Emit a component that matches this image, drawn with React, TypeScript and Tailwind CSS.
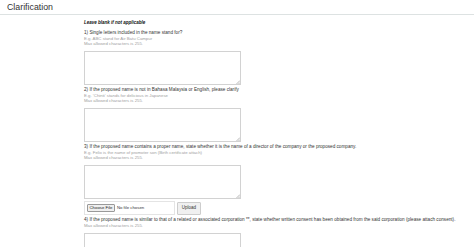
const sections = [
  {
    label: '1) Single letters included in the name stand for?',
    hints: ['E.g. ABC stand for Air Batu Campur', 'Max allowed characters is 255.'],
  },
  {
    label: '2) If the proposed name is not in Bahasa Malaysia or English, please clarify',
    hints: ['E.g. \u2018Chinti\u2019 stands for delicious in Japanese', 'Max allowed characters is 255.'],
  },
  {
    label:
      '3) If the proposed name contains a proper name, state whether it is the name of a director of the company or the proposed company.',
    hints: ['E.g. Felix is the name of promoter son (Birth certificate attach)', 'Max allowed characters is 255.'],
    upload: true,
  },
  {
    label:
      '4) If the proposed name is similar to that of a related or associated corporation **, state whether written consent has been obtained from the said corporation (please attach consent).',
    hints: ['Max allowed characters is 255.'],
  },
]

function Box() {
  return (
    <div className="relative mt-[5px] w-[157px] h-[34px]">
      <textarea className="block w-full h-full resize-none border border-[#d2d2d2] bg-white" />
      <svg className="absolute right-[1.5px] bottom-[1.5px] pointer-events-none" width="4" height="4" viewBox="0 0 4 4">
        <path d="M4 0.5L0.5 4M4 2.5L2.5 4" stroke="#8a8a8a" strokeWidth="0.6" />
      </svg>
    </div>
  )
}

export default function App() {
  return (
    <div className="w-[474px] h-[247px] overflow-hidden bg-white font-['Liberation_Sans',Arial,sans-serif]">
      <div className="h-[15px] pt-[2px] pl-[7px] border-b border-[#dde2e2]">
        <h1 className="text-[8.8px] leading-[11px] text-[#333]">Clarification</h1>
      </div>
      <div className="pl-[84px] pt-[5px]">
        <p className="text-[4.5px] leading-[6px] font-bold italic text-[#111]">Leave blank if not applicable</p>
        {sections.map((s, i) => (
          <div key={i} className={i === 0 ? 'mt-[4px]' : 'mt-[2px]'}>
            <p className="text-[4.65px] leading-[6px] text-[#333] whitespace-nowrap">{s.label}</p>
            {s.hints.map((h) => (
              <p key={h} className="text-[4.3px] leading-[5px] text-[#a0a0a0] whitespace-nowrap">
                {h}
              </p>
            ))}
            <Box />
            {s.upload && (
              <div className="flex items-center gap-[2px] mt-[2px]">
                <div className="flex items-center w-[91px] h-[14px] border border-[#e4e4e4] px-[2px] gap-[2px]">
                  <span className="px-[1.5px] h-[8px] flex items-center border border-[#999] bg-[#efefef] rounded-[1px] text-[4.3px] text-[#222]">
                    Choose File
                  </span>
                  <span className="text-[4.3px] text-[#333]">No file chosen</span>
                </div>
                <button className="w-[24px] h-[13px] border border-[#cdcdcd] bg-[#f0f0f0] rounded-[1px] text-[4.5px] text-[#333]">
                  Upload
                </button>
              </div>
            )}
          </div>
        ))}
      </div>
    </div>
  )
}
